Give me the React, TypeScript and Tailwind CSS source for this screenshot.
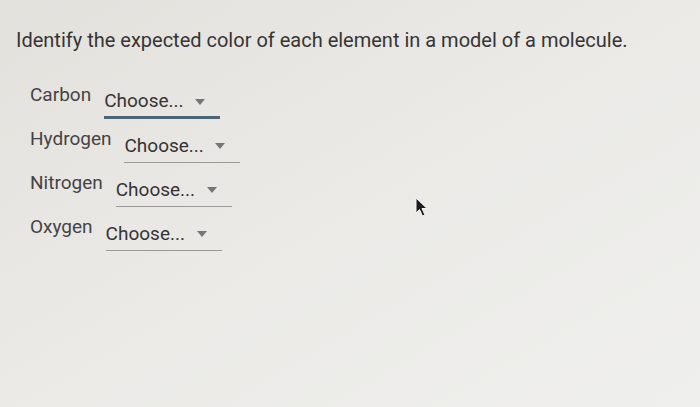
import { useState } from 'react';

const ELEMENTS = [
  { name: 'Carbon', focused: true },
  { name: 'Hydrogen', focused: false },
  { name: 'Nitrogen', focused: false },
  { name: 'Oxygen', focused: false },
];

function ChooseSelect({ focused }: { focused: boolean }) {
  const [value] = useState('Choose...');
  return (
    <div
      className={`relative w-[116px] h-[34px] mt-[2px] flex items-center ${
        focused ? 'border-b-[3px] border-[#4c6576]' : 'border-b border-[#9a9a98]'
      }`}
    >
      <span className="text-[19px] text-[#343434] leading-none">{value}</span>
      {/* caret */}
      <svg className="absolute right-[15px] top-[14px]" width="10" height="6" viewBox="0 0 10 6">
        <path d="M0 0 L10 0 L5 6 Z" fill="#767676" />
      </svg>
    </div>
  );
}

export default function App() {
  return (
    <div
      className="relative w-[700px] h-[407px] overflow-hidden bg-gradient-to-br from-[#e3e1dc] via-[#ebeae7] to-[#efefed]"
      style={{ fontFamily: 'Roboto, "Noto Sans", sans-serif' }}
    >
      <div className="pl-[16px] pt-[25px]">
        <h1 className="text-[20px] text-[#353535] leading-[30px]">
          Identify the expected color of each element in a model of a molecule.
        </h1>

        <div className="mt-[28px] pl-[14px] flex flex-col">
          {ELEMENTS.map((el) => (
            <div key={el.name} className="h-[44px] flex items-start gap-[13px]">
              <span className="text-[19px] text-[#444444] leading-[24px]">{el.name}</span>
              <ChooseSelect focused={el.focused} />
            </div>
          ))}
        </div>
      </div>

      {/* mouse pointer */}
      <svg className="absolute left-[415px] top-[197px]" width="14" height="20" viewBox="0 0 14 20">
        <path d="M1 1 L1 16 L4.5 12.5 L7.5 19 L10 18 L7 11.5 L12 11.5 Z" fill="#1c1c1c" stroke="#f4f4f4" strokeWidth="1" />
      </svg>
    </div>
  );
}
